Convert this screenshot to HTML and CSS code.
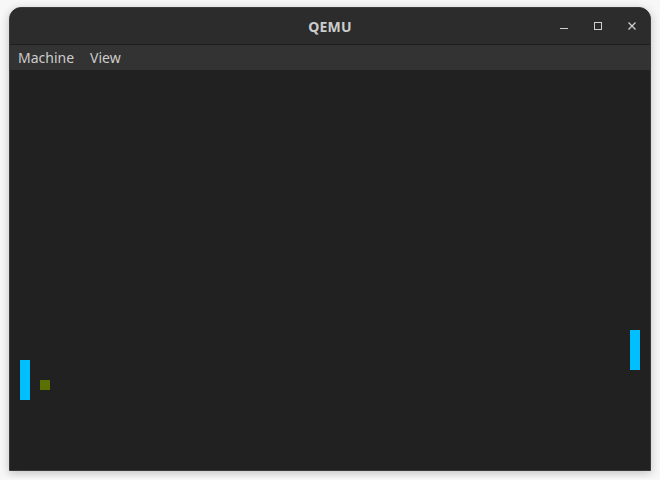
FILE: index.html
```html
<!DOCTYPE html>
<html lang="en">
  <head>
    <meta charset="UTF-8" />
    <meta name="viewport" content="width=device-width, initial-scale=1.0" />
    <title>QEMU</title>
    <link rel="stylesheet" href="styles.css">
  </head>
  <body>
    <div class="window">
      <div class="titlebar">
        <div class="title">QEMU</div>
        <div class="controls">
          <svg class="ctl" width="10" height="10" viewBox="0 0 10 10">
            <line x1="1" y1="7.5" x2="9" y2="7.5" stroke="#cfcfcf" stroke-width="1" />
          </svg>
          <svg class="ctl" width="10" height="10" viewBox="0 0 10 10">
            <rect x="1.5" y="1.5" width="7" height="7" fill="none" stroke="#cfcfcf" stroke-width="1" />
          </svg>
          <svg class="ctl" width="10" height="10" viewBox="0 0 10 10">
            <path d="M1.5 1.5 L8.5 8.5 M8.5 1.5 L1.5 8.5" stroke="#cfcfcf" stroke-width="1.3" />
          </svg>
        </div>
      </div>
      <div class="menubar">
        <span class="menu">Machine</span>
        <span class="menu">View</span>
      </div>
      <div class="screen">
        <div class="paddle left"></div>
        <div class="ball"></div>
        <div class="paddle right"></div>
      </div>
    </div>
  </body>
</html>
```

FILE: styles.css
```css
* {
  margin: 0;
  padding: 0;
  box-sizing: border-box;
}
body {
  background: #f7f7f7;
  padding: 7px 9px;
  font-family: "Noto Sans", "DejaVu Sans", sans-serif;
}
.window {
  width: 642px;
  border: 1px solid #3a3a3a;
  border-radius: 12px 12px 0 0;
  overflow: hidden;
  box-shadow: 0 2px 10px rgba(0, 0, 0, 0.22);
  background: #212121;
}
.titlebar {
  position: relative;
  height: 37px;
  background: #2c2c2c;
  border-bottom: 1px solid #1d1d1d;
  display: flex;
  align-items: center;
  justify-content: center;
}
.title {
  color: #cccccc;
  font-weight: bold;
  font-size: 14px;
  letter-spacing: 0.2px;
}
.controls {
  position: absolute;
  right: 13px;
  top: 13px;
  display: flex;
  gap: 24px;
}
.ctl {
  display: block;
}
.menubar {
  height: 25px;
  background: #333333;
  display: flex;
  align-items: center;
  gap: 16px;
  padding-left: 8px;
}
.menu {
  color: #cccccc;
  font-size: 14px;
}
.screen {
  position: relative;
  width: 640px;
  height: 400px;
  background: #212121;
}
.paddle {
  position: absolute;
  width: 10px;
  height: 40px;
  background: #00bfff;
}
.paddle.left {
  left: 10px;
  top: 290px;
}
.paddle.right {
  left: 620px;
  top: 260px;
}
.ball {
  position: absolute;
  left: 30px;
  top: 310px;
  width: 10px;
  height: 10px;
  background: #5a7000;
}
```
